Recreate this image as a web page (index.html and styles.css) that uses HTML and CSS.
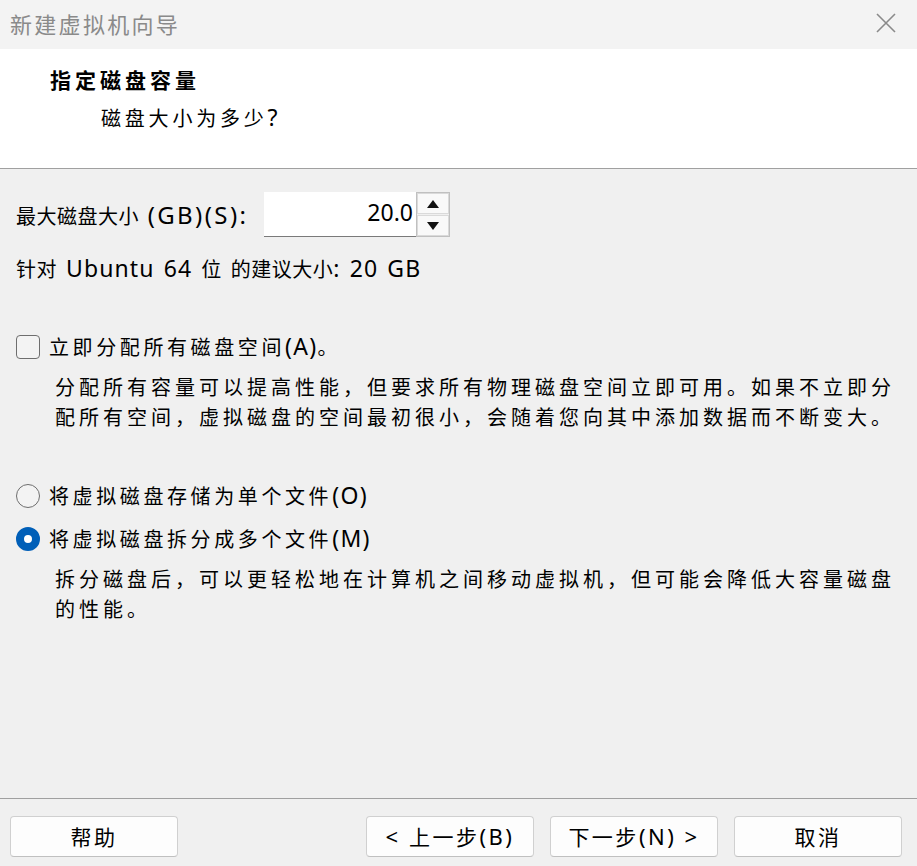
FILE: index.html
```html
<!DOCTYPE html>
<html lang="zh-CN">
<head>
<meta charset="utf-8">
<title>新建虚拟机向导</title>
<link rel="stylesheet" href="styles.css">
</head>
<body>
<div class="window">
  <div class="titlebar">
    <span class="title">新建虚拟机向导</span>
    <span class="close">
      <svg width="22" height="22" viewBox="0 0 22 22"><path d="M2 2 L20 20 M20 2 L2 20" stroke="#8a8a8a" stroke-width="1.6" fill="none"/></svg>
    </span>
  </div>
  <div class="header">
    <div class="h-title">指定磁盘容量</div>
    <div class="h-sub">磁盘大小为多少<span class="lat">?</span></div>
  </div>
  <div class="content">
    <div class="size-row">
      <span class="label">最大磁盘大小<span class="lat"> (GB)(S):</span></span>
      <div class="spin">
        <div class="spin-value">20.0</div>
        <div class="spin-btns">
          <div class="spin-btn"><svg width="12" height="8" viewBox="0 0 12 8"><path d="M6 0 L12 8 L0 8 Z" fill="#111"/></svg></div>
          <div class="spin-btn"><svg width="12" height="8" viewBox="0 0 12 8"><path d="M0 0 L12 0 L6 8 Z" fill="#111"/></svg></div>
        </div>
      </div>
    </div>
    <div class="rec">针对<span class="lat"> Ubuntu 64 </span>位<span class="lat"> </span>的建议大小<span class="lat">: 20 GB</span></div>

    <div class="opt opt-check">
      <span class="checkbox"></span>
      <span class="opt-label">立即分配所有磁盘空间<span class="lat">(A)</span>。</span>
    </div>
    <div class="desc">分配所有容量可以提高性能，但要求所有物理磁盘空间立即可用。如果不立即分<br>配所有空间，虚拟磁盘的空间最初很小，会随着您向其中添加数据而不断变大。</div>

    <div class="opt opt-r1">
      <span class="radio"></span>
      <span class="opt-label">将虚拟磁盘存储为单个文件<span class="lat">(O)</span></span>
    </div>
    <div class="opt opt-r2">
      <span class="radio checked"></span>
      <span class="opt-label">将虚拟磁盘拆分成多个文件<span class="lat">(M)</span></span>
    </div>
    <div class="desc">拆分磁盘后，可以更轻松地在计算机之间移动虚拟机，但可能会降低大容量磁盘<br>的性能。</div>
  </div>
  <div class="footer">
    <button class="btn">帮助</button>
    <div class="spacer"></div>
    <button class="btn"><span class="lat">&lt; </span>上一步<span class="lat">(B)</span></button>
    <button class="btn">下一步<span class="lat">(N) &gt;</span></button>
    <button class="btn">取消</button>
  </div>
</div>
</body>
</html>
```

FILE: styles.css
```css
* { box-sizing: border-box; }
html, body { margin: 0; padding: 0; }
body {
  background: #f0f0f0;
  font-family: "Noto Sans", "Noto Sans CJK SC", sans-serif;
  color: #000;
}
.lat {
  font-size: 23px;
  letter-spacing: 0;
}
.window {
  width: 917px;
  height: 866px;
  display: flex;
  flex-direction: column;
}
.titlebar {
  height: 49px;
  background: #f3f3f3;
  display: flex;
  align-items: center;
  justify-content: space-between;
  padding: 0 20px 4px 10px;
}
.title {
  font-size: 22px;
  letter-spacing: 2.3px;
  color: #8a8a8a;
}
.close { display: flex; }
.header {
  height: 120px;
  background: #fff;
  border-bottom: 1px solid #a0a0a0;
  padding-top: 16px;
}
.h-title {
  font-size: 21px;
  font-weight: bold;
  letter-spacing: 4px;
  line-height: 30px;
  margin-left: 50px;
}
.h-sub {
  font-size: 20px;
  letter-spacing: 3.8px;
  line-height: 30px;
  margin-left: 101px;
  margin-top: 7px;
}
.content {
  flex: 1;
  padding-top: 23px;
  padding-left: 16px;
  border-bottom: 1px solid #a0a0a0;
}
.size-row {
  display: flex;
  align-items: center;
  height: 45px;
}
.label {
  font-size: 20px;
  width: 248px;
  letter-spacing: 0.5px;
}
.label .lat { font-size: 24px; letter-spacing: 2.4px; }
.spin {
  display: flex;
  height: 45px;
}
.spin-value {
  width: 152px;
  background: #fff;
  border-bottom: 1px solid #7a7a7a;
  font-size: 23px;
  text-align: right;
  padding-right: 3px;
  line-height: 40px;
}
.spin-btns {
  width: 34px;
  border: 1px solid #c0c0c0;
  display: flex;
  flex-direction: column;
  gap: 1px;
  background: #f0f0f0;
}
.spin-btn {
  flex: 1;
  background: #f9f9f9;
  border: 1px solid #dadada;
  display: flex;
  align-items: center;
  justify-content: center;
}
.rec {
  font-size: 20px;
  letter-spacing: 0.5px;
  line-height: 30px;
  margin-top: 16px;
  word-spacing: 2px;
}
.rec .lat { letter-spacing: 1.1px; }
.opt {
  display: flex;
  align-items: center;
  height: 30px;
}
.opt-check { margin-top: 47px; }
.opt-r1 { margin-top: 48px; }
.opt-r2 { margin-top: 13px; }
.opt-label {
  font-size: 20px;
  letter-spacing: 3.6px;
  margin-left: 9px;
  line-height: 30px;
}
.opt-label .lat { letter-spacing: 1.3px; }
.checkbox {
  width: 24px;
  height: 24px;
  border: 1.5px solid #6e6e6e;
  border-radius: 4px;
  background: #f3f3f3;
}
.radio {
  width: 24px;
  height: 24px;
  border: 1.5px solid #6e6e6e;
  border-radius: 50%;
  background: #f3f3f3;
}
.radio.checked {
  border: 8px solid #005fb8;
  background: #fff;
}
.desc {
  font-size: 20px;
  letter-spacing: 4px;
  line-height: 30px;
  margin-top: 11px;
  margin-left: 39px;
  white-space: nowrap;
}
.footer {
  height: 67px;
  display: flex;
  align-items: flex-start;
  padding: 17px 15px 0 10px;
  gap: 16px;
}
.spacer { flex: 1; }
.btn {
  width: 168px;
  height: 41px;
  background: #fdfdfd;
  border: 1px solid #d0d0d0;
  border-bottom-color: #c0c0c0;
  border-radius: 4px;
  font-family: "Noto Sans", "Noto Sans CJK SC", sans-serif;
  font-size: 21px;
  letter-spacing: 2.5px;
  color: #000;
  padding: 0;
  line-height: 30px;
}
.btn .lat { font-size: 22px; letter-spacing: 2.5px; }
```
